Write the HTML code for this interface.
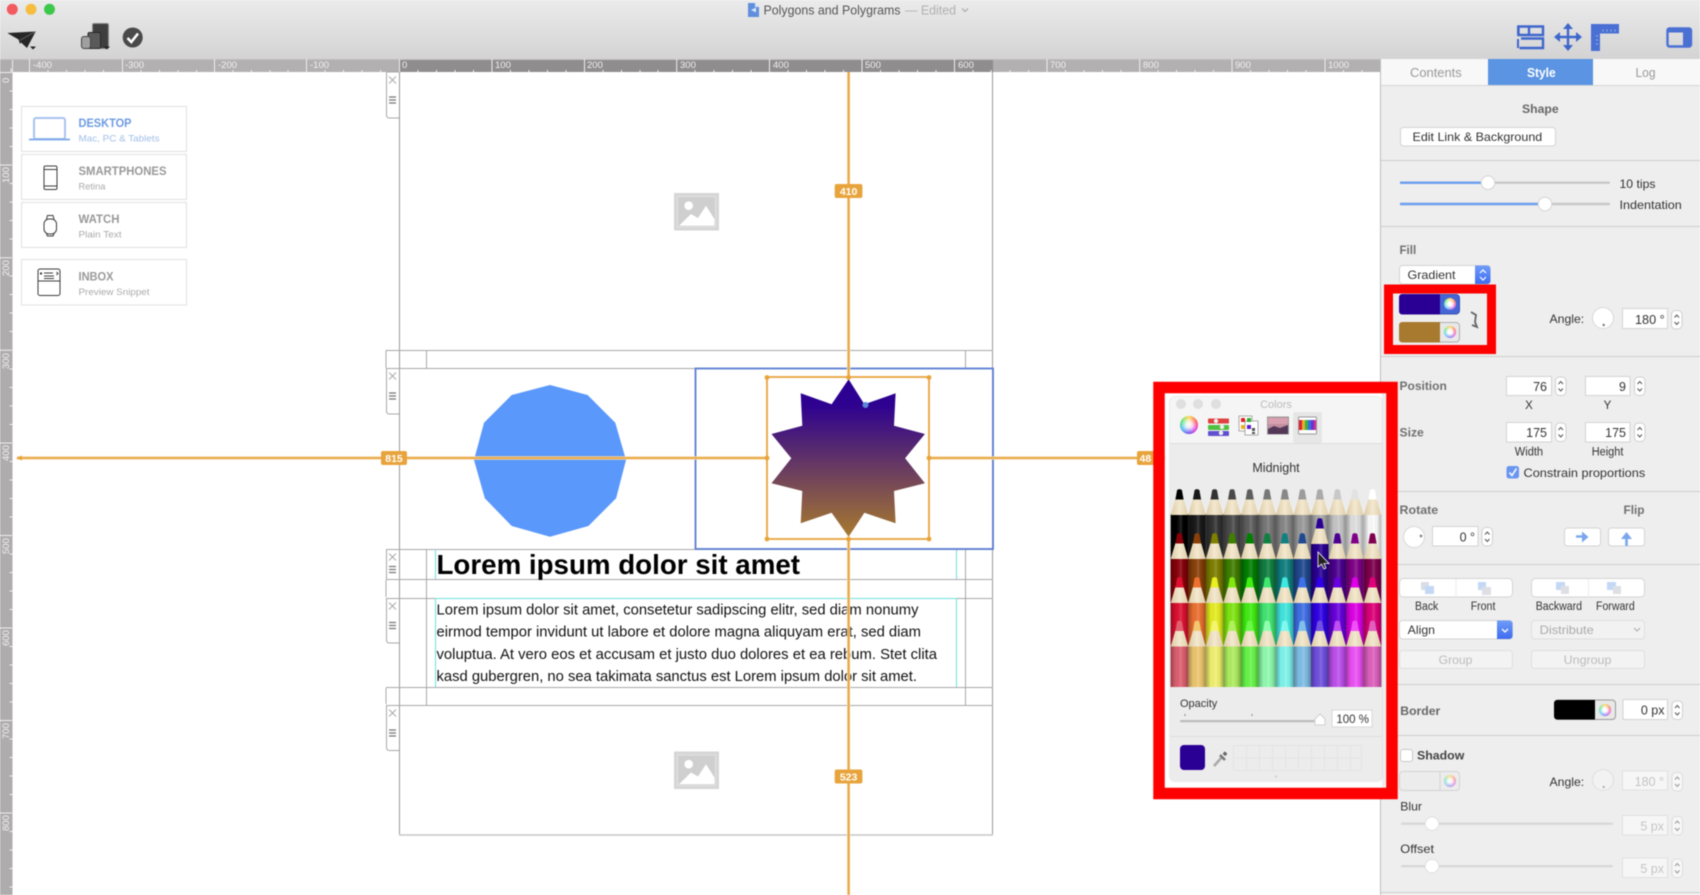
<!DOCTYPE html>
<html><head><meta charset="utf-8"><title>Polygons and Polygrams</title>
<style>
html,body{margin:0;padding:0;width:1700px;height:895px;overflow:hidden;background:#fff}
svg{position:absolute;left:0;top:0;filter:blur(.55px)}
text{font-family:"Liberation Sans",sans-serif;font-size:12px;fill:#333}
.b{font-weight:bold;fill:#707070}
.w{position:absolute;border-radius:50%;background:radial-gradient(circle,#fff 0,#fff 22%,rgba(255,255,255,0) 80%),conic-gradient(#ffd030,#ff5a4a,#e040d0,#6a60f0,#40c8f0,#50e070,#ffd030);filter:blur(.4px)}
</style></head><body>
<svg width="1700" height="895" viewBox="0 0 1700 895" xmlns="http://www.w3.org/2000/svg">
<defs>
<linearGradient id="tb" x1="0" y1="0" x2="0" y2="1"><stop offset="0" stop-color="#ebebec"/><stop offset="1" stop-color="#d4d3d4"/></linearGradient>
<linearGradient id="st" x1="0" y1="0" x2="0" y2="1"><stop offset="0" stop-color="#2a0094"/><stop offset=".17" stop-color="#2f0290"/><stop offset="1" stop-color="#a87a2e"/></linearGradient>
<linearGradient id="sel" x1="0" y1="0" x2="0" y2="1"><stop offset="0" stop-color="#6f9cf8"/><stop offset="1" stop-color="#3f6cf0"/></linearGradient>
<linearGradient id="sh" x1="0" y1="0" x2="1" y2="0"><stop offset="0" stop-color="#000" stop-opacity=".32"/><stop offset=".3" stop-color="#000" stop-opacity=".02"/><stop offset=".58" stop-color="#fff" stop-opacity=".16"/><stop offset=".75" stop-color="#000" stop-opacity=".04"/><stop offset="1" stop-color="#000" stop-opacity=".3"/></linearGradient>
<linearGradient id="cn" x1="0" y1="0" x2="1" y2="0"><stop offset="0" stop-color="#dcc9a2"/><stop offset=".5" stop-color="#f3e9d0"/><stop offset="1" stop-color="#dfcda8"/></linearGradient>
<g id="p"><rect y="25" width="17.55" height="90"/><rect y="25" width="17.55" height="90" fill="url(#sh)"/><path d="M0 26 4.7 10H12.9L17.55 26Z" fill="url(#cn)"/><path d="M6.4 1Q8.8-.8 11.2 1L12.9 10.5H4.7Z"/></g>
<g id="stp"><rect x=".5" y=".5" width="10.5" height="18.5" rx="4" fill="#fff" stroke="#d0d0d0"/><path d="M3.5 7.5 5.75 5 8 7.5M3.5 12 5.75 14.5 8 12" fill="none" stroke="#555" stroke-width="1"/></g>
<g id="x"><path d="M-3.5-3.5 3.5 3.5M3.5-3.5-3.5 3.5" stroke="#aaa" stroke-width="1" fill="none"/></g>
<g id="h"><path d="M-3.5-3H3.5M-3.5 0H3.5M-3.5 3H3.5" stroke="#777" stroke-width="1.2" fill="none"/></g>
<g id="im"><rect width="45" height="37.5" fill="#d6d6d6"/><rect x="3.5" y="3.5" width="38" height="30.5" fill="#cfcfcf" stroke="#e2e2e2" stroke-width="1"/><path d="M5 32.7 17 21 24 25 32 12.7 40.5 26V32.7Z" fill="#fff"/><circle cx="14.7" cy="12.7" r="4.3" fill="#fff"/></g>
</defs>

<!-- toolbar -->
<rect width="1700" height="59" fill="url(#tb)"/>
<circle cx="12.3" cy="9.3" r="5.5" fill="#f25a5f"/><circle cx="31" cy="9.3" r="5.5" fill="#f6bd3f"/><circle cx="49.5" cy="9.3" r="5.5" fill="#3ec84b"/>
<path d="M7.3 33 35.7 31.5 27 48 21 42.5 20 44 18.5 39.5Z" fill="#262626"/><path d="M35.7 31.5 19.5 40.5" stroke="#666" stroke-width=".8"/><path d="M30 46.5H36L33 49.5Z" fill="#222"/>
<rect x="92.5" y="23.5" width="16" height="25" rx="1.5" fill="#3e3e3e" stroke="#8a8a8a"/>
<rect x="88" y="32.5" width="12.5" height="16" rx="1.5" fill="#5a5a5a" stroke="#2a2a2a"/>
<rect x="81.5" y="36.5" width="9" height="12" rx="2.5" fill="#a0a0a0" stroke="#444"/>
<path d="M103.5 46.5H110L106.7 49.5Z" fill="#222"/>
<circle cx="132.7" cy="37.5" r="10" fill="#4a4a4a"/><path d="M127.5 38 131.3 42 138 33.5" fill="none" stroke="#fff" stroke-width="2.6"/>
<path d="M748 3H755L759 7V17H748Z" fill="#5f8fdc"/><path d="M755 3 759 7H755Z M751 10 756 7.5V12.5Z" fill="#d8e6fa"/>
<text x="763.5" y="14.5" font-size="12.5" style="font-size:12.5px;fill:#555" textLength="137" lengthAdjust="spacingAndGlyphs">Polygons and Polygrams</text>
<text x="905" y="14.5" style="font-size:12.5px;fill:#b0b0b0" textLength="51" lengthAdjust="spacingAndGlyphs">— Edited</text>
<path d="M962 8.5 965 11.5 968 8.5" fill="none" stroke="#aaa" stroke-width="1.2"/>
<g fill="none" stroke="#3f66cc" stroke-width="2.4">
<path d="M1518.5 26.5H1543V35H1518.5ZM1529 26.5V35M1521 38.5H1543V48H1519.5"/>
<path d="M1518 26V35M1518 39V48" stroke-width="2"/>
<path d="M1568 25V49M1556 37H1580"/>
</g>
<path d="M1568 23 1573 29H1563ZM1568 51 1573 45H1563ZM1554 37 1560 32V42ZM1582 37 1576 32V42Z" fill="#3f66cc"/>
<path d="M1591 24H1619V33.5H1600V51H1591Z" fill="#4a70d4"/>
<path d="M1603 31.5V29.5M1607 31.5V29.5M1611 31.5V29.5M1615 31.5V29.5M1596 36H1598M1596 40H1598M1596 44H1598" stroke="#9db6ea" stroke-width="1"/>
<rect x="1667.5" y="28.5" width="23.5" height="18" rx="2" fill="none" stroke="#4a70d4" stroke-width="2.4"/><rect x="1667" y="28" width="24" height="4.5" fill="#4a70d4"/><rect x="1683" y="28" width="8" height="19" fill="#4a70d4"/>

<!-- canvas + rulers -->
<rect x="0" y="72" width="1381" height="823" fill="#fff"/>
<rect x="0" y="59" width="1381" height="13" fill="#b2b0b1"/>
<rect x="399" y="59" width="594" height="13" fill="#8f8d8e"/>
<rect x="0" y="59" width="12.5" height="836" fill="#aeacad"/>
<rect x="0" y="59" width="1381" height="1" fill="#c0bfc0"/>
<g stroke="#efefef" stroke-width="1">
<path d="M29.5 59V72M122.5 59V72M214.5 59V72M306.5 59V72M399.5 59V72M492 59V72M584.5 59V72M676.7 59V72M769.5 59V72M862 59V72M954.5 59V72M1047 59V72M1139.7 59V72M1232 59V72M1325 59V72M12.5 60V72" />
<path d="M11 68.5V72M29.5 68.5V72M48 70V72M66.5 70V72M85 70V72M103.5 70V72M122.5 68V72M141 70V72M159.5 70V72M178 70V72M196.5 70V72M233 70V72M251.5 70V72M270 70V72M288 70V72M325 70V72M343.5 70V72M362 70V72M380.5 70V72M418 70V72M436.5 70V72M455 70V72M473.5 70V72M510.5 70V72M529 70V72M547.5 70V72M566 70V72M603 70V72M621.5 70V72M640 70V72M658 70V72M695 70V72M714 70V72M732.5 70V72M751 70V72M788 70V72M806.5 70V72M825 70V72M843.5 70V72M880.5 70V72M899 70V72M917.5 70V72M936 70V72M973 70V72M991 70V72M1010 70V72M1028.5 70V72M1065.5 70V72M1084 70V72M1102.5 70V72M1121 70V72M1158 70V72M1176.5 70V72M1195 70V72M1213.5 70V72M1250.5 70V72M1269 70V72M1287.5 70V72M1306 70V72M1343.5 70V72M1362 70V72"/>
<path d="M0 72.5H12M0 165H12M0 257.7H12M0 350.3H12M0 443H12M0 535.5H12M0 628H12M0 720.5H12M0 813H12"/>
<path d="M9.5 91H12.5M9.5 109.5H12.5M9.5 128H12.5M9.5 146.5H12.5M9.5 183.5H12.5M9.5 202H12.5M9.5 220.5H12.5M9.5 239H12.5M9.5 276H12.5M9.5 294.5H12.5M9.5 313H12.5M9.5 331.5H12.5M9.5 369H12.5M9.5 387.5H12.5M9.5 406H12.5M9.5 424.5H12.5M9.5 461.5H12.5M9.5 480H12.5M9.5 498.5H12.5M9.5 517H12.5M9.5 554H12.5M9.5 572.5H12.5M9.5 591H12.5M9.5 609.5H12.5M9.5 646.5H12.5M9.5 665H12.5M9.5 683.5H12.5M9.5 702H12.5M9.5 739H12.5M9.5 757.5H12.5M9.5 776H12.5M9.5 794.5H12.5M9.5 831.5H12.5M9.5 850H12.5M9.5 868.5H12.5M9.5 887H12.5"/>
</g>
<g style="fill:#fff" font-size="9">
<text x="33" y="68" style="font-size:9.5px;fill:#f2f2f2">-400</text><text x="125" y="68" style="font-size:9.5px;fill:#f2f2f2">-300</text><text x="218" y="68" style="font-size:9.5px;fill:#f2f2f2">-200</text><text x="310" y="68" style="font-size:9.5px;fill:#f2f2f2">-100</text>
<text x="402" y="68" style="font-size:9.5px;fill:#f2f2f2">0</text><text x="495" y="68" style="font-size:9.5px;fill:#f2f2f2">100</text><text x="587" y="68" style="font-size:9.5px;fill:#f2f2f2">200</text><text x="680" y="68" style="font-size:9.5px;fill:#f2f2f2">300</text><text x="773" y="68" style="font-size:9.5px;fill:#f2f2f2">400</text><text x="865" y="68" style="font-size:9.5px;fill:#f2f2f2">500</text><text x="958" y="68" style="font-size:9.5px;fill:#f2f2f2">600</text><text x="1050" y="68" style="font-size:9.5px;fill:#f2f2f2">700</text><text x="1143" y="68" style="font-size:9.5px;fill:#f2f2f2">800</text><text x="1235" y="68" style="font-size:9.5px;fill:#f2f2f2">900</text><text x="1328" y="68" style="font-size:9.5px;fill:#f2f2f2">1000</text>
<g style="font-size:9.5px">
<text transform="translate(9,83) rotate(-90)" style="font-size:9.5px;fill:#f2f2f2">0</text><text transform="translate(9,183) rotate(-90)" style="font-size:9.5px;fill:#f2f2f2">100</text><text transform="translate(9,276) rotate(-90)" style="font-size:9.5px;fill:#f2f2f2">200</text><text transform="translate(9,369) rotate(-90)" style="font-size:9.5px;fill:#f2f2f2">300</text><text transform="translate(9,461) rotate(-90)" style="font-size:9.5px;fill:#f2f2f2">400</text><text transform="translate(9,554) rotate(-90)" style="font-size:9.5px;fill:#f2f2f2">500</text><text transform="translate(9,646) rotate(-90)" style="font-size:9.5px;fill:#f2f2f2">600</text><text transform="translate(9,739) rotate(-90)" style="font-size:9.5px;fill:#f2f2f2">700</text><text transform="translate(9,831) rotate(-90)" style="font-size:9.5px;fill:#f2f2f2">800</text>
</g></g>

<!-- sidebar cards -->
<g fill="#fff" stroke="#e4e4e4" stroke-width="1.2">
<rect x="21.5" y="106.5" width="165" height="45"/><rect x="21.5" y="154.5" width="165" height="45"/><rect x="21.5" y="202.5" width="165" height="45"/><rect x="21.5" y="259.5" width="165" height="45.5"/>
</g>
<text x="78.5" y="127" class="b" style="fill:#6d9be0;font-size:11.5px" textLength="53" lengthAdjust="spacingAndGlyphs">DESKTOP</text>
<text x="78.5" y="141.5" style="fill:#a0bfe8;font-size:9.5px" textLength="81" lengthAdjust="spacingAndGlyphs">Mac, PC &amp; Tablets</text>
<text x="78.5" y="175" class="b" style="fill:#999;font-size:11.5px" textLength="88" lengthAdjust="spacingAndGlyphs">SMARTPHONES</text>
<text x="78.5" y="189.5" style="fill:#aaa;font-size:9.5px" textLength="27" lengthAdjust="spacingAndGlyphs">Retina</text>
<text x="78.5" y="223" class="b" style="fill:#999;font-size:11.5px" textLength="41" lengthAdjust="spacingAndGlyphs">WATCH</text>
<text x="78.5" y="237.5" style="fill:#aaa;font-size:9.5px" textLength="43" lengthAdjust="spacingAndGlyphs">Plain Text</text>
<text x="78.5" y="280.5" class="b" style="fill:#999;font-size:11.5px" textLength="35" lengthAdjust="spacingAndGlyphs">INBOX</text>
<text x="78.5" y="295" style="fill:#aaa;font-size:9.5px" textLength="71" lengthAdjust="spacingAndGlyphs">Preview Snippet</text>
<rect x="34" y="118" width="31" height="21" rx="2" fill="none" stroke="#a8c4f0" stroke-width="2"/><path d="M29 139.5H70" stroke="#7ba6e8" stroke-width="1.8"/>
<g fill="none" stroke="#3c3c3c" stroke-width="1"><rect x="44" y="166" width="13" height="23.5" rx="1.5"/><path d="M44 169.5H57M44 186H57"/>
<rect x="44" y="219" width="12.5" height="15" rx="5"/><path d="M46.5 219 47.5 215.5H53L54 219M46.5 234 47.5 236H53L54 234"/>
<rect x="38" y="269" width="22" height="26.5" rx="2"/><path d="M38 281H60M44 273H53M44 276H54M44 278.5H54M56.5 272 58 273.5 56.5 275"/></g><rect x="40" y="272.5" width="2" height="2" fill="#333"/>

<!-- page layout lines -->
<g fill="none" stroke="#a8a8a8" stroke-width="1">
<path d="M399.5 72V835M992.5 72V835" stroke="#999"/>
<path d="M386 350.5H993M386 368.5H993M386 549.5H993M386 579.5H993M386 598.5H993M386 687.5H993M386 705.5H993"/>
<path d="M426.5 350V369M965.5 350V369M426.5 549V687M965.5 549V705M426.5 687V705"/>
<path d="M399 835H993" stroke="#c8c8c8" stroke-width="1.6"/>
<path d="M386 351Q386 350 388 350.5M386 351V368M386 580V597M386 688V704"/>
<path d="M399 72H387M386.5 72V115Q386.5 118 389.5 118H399M386.5 369V411Q386.5 414 389.5 414H399M386.5 549V579M386.5 598V640Q386.5 643 389.5 643H399M386.5 705V747Q386.5 750.5 389.5 750.5H399"/>
</g>
<g stroke="#6ee0e0" stroke-width="1" fill="none"><path d="M435.5 549V579M956.5 549V579M435.5 598V687M956.5 598V687M435.5 598.5H957" /></g>
<use href="#x" x="392.5" y="80"/><use href="#h" x="392.5" y="100"/><use href="#x" x="392.5" y="376"/><use href="#h" x="392.5" y="396"/><use href="#x" x="392.5" y="557"/><use href="#h" x="392.5" y="569.5"/><use href="#x" x="392.5" y="606"/><use href="#h" x="392.5" y="625.5"/><use href="#x" x="392.5" y="713"/><use href="#h" x="392.5" y="733"/>
<use href="#im" x="674" y="193"/><use href="#im" x="674" y="751.5"/>

<!-- shapes -->
<polygon fill="#5b98fb" points="550,385 587.6,395 615.3,422.7 626,460 616.1,498.3 588.4,526 550,536.7 511.7,526 484.8,498.3 474,460 484,422.7 511.7,395"/>
<rect x="695.5" y="368.5" width="297.5" height="180.5" fill="none" stroke="#5b7ed2" stroke-width="1.8"/>
<polygon fill="url(#st)" points="848.6,379.3 864.4,404.3 895.6,393.3 894,425.7 924.9,434 905.1,458.3 924.9,483.3 894,491 895.6,523.3 864.4,512.7 848.6,536.7 831.6,512.7 800.7,523.3 802.3,491 771.5,483.3 791.3,458.3 771.5,434 802.3,425.7 800.7,393.3 831.6,404.3"/>
<circle cx="865.5" cy="405" r="3" fill="#5b86d8"/>

<!-- text -->
<text x="436.5" y="574" style="font-size:28px;font-weight:bold;fill:#000" textLength="363.5" lengthAdjust="spacingAndGlyphs">Lorem ipsum dolor sit amet</text>
<text x="436.5" y="614.5" style="font-size:15px;fill:#111" textLength="482" lengthAdjust="spacingAndGlyphs">Lorem ipsum dolor sit amet, consetetur sadipscing elitr, sed diam nonumy</text>
<text x="436.5" y="636.5" style="font-size:15px;fill:#111" textLength="484.5" lengthAdjust="spacingAndGlyphs">eirmod tempor invidunt ut labore et dolore magna aliquyam erat, sed diam</text>
<text x="436.5" y="659" style="font-size:15px;fill:#111" textLength="500.5" lengthAdjust="spacingAndGlyphs">voluptua. At vero eos et accusam et justo duo dolores et ea rebum. Stet clita</text>
<text x="436.5" y="681" style="font-size:15px;fill:#111" textLength="480.5" lengthAdjust="spacingAndGlyphs">kasd gubergren, no sea takimata sanctus est Lorem ipsum dolor sit amet.</text>

<!-- guides -->
<g fill="none">
<path d="M848.6 72V377M848.6 539V895" stroke="#f4dcb4" stroke-width="3.4"/>
<path d="M848.6 72V377M848.6 539V895" stroke="#e8a43c" stroke-width="1.8"/>
<path d="M17 458H766M929 458H1170" stroke="#f4dcb4" stroke-width="3.4"/>
<path d="M17 458H766M929 458H1170" stroke="#e8a43c" stroke-width="1.8"/>
<rect x="767" y="377" width="162" height="162" stroke="#e8a43c" stroke-width="1.8"/>
</g>
<path d="M16 458 22 455.5V460.5Z" fill="#e8a43c"/>
<g fill="#e8a43c"><circle cx="767" cy="377.5" r="2.4"/><circle cx="848.6" cy="377.5" r="2.4"/><circle cx="929" cy="377.5" r="2.4"/><circle cx="767" cy="458" r="2.4"/><circle cx="929" cy="458" r="2.4"/><circle cx="767" cy="539" r="2.4"/><circle cx="848.6" cy="539" r="2.4"/><circle cx="929" cy="539" r="2.4"/>
<rect x="381" y="451" width="26" height="14" rx="2"/><rect x="834.7" y="184" width="27.7" height="14" rx="2"/><rect x="834.7" y="769.5" width="27.7" height="14" rx="2"/><rect x="1137" y="451" width="26" height="14" rx="2"/></g>
<g style="font-weight:bold"><text x="394" y="462" text-anchor="middle" style="font-size:10.5px;fill:#fff;font-weight:bold">815</text><text x="848.6" y="195" text-anchor="middle" style="font-size:10.5px;fill:#fff;font-weight:bold">410</text><text x="848.6" y="780.5" text-anchor="middle" style="font-size:10.5px;fill:#fff;font-weight:bold">523</text><text x="1139.5" y="462" style="font-size:10.5px;fill:#fff;font-weight:bold">48</text></g>

<!-- inspector panel -->
<rect x="1380" y="59" width="320" height="836" fill="#eeeeee"/>
<rect x="1380" y="59" width="1" height="836" fill="#bdbdbd"/>
<rect x="1381" y="59" width="319" height="26" fill="#f8f8f8"/>
<rect x="1381" y="85" width="319" height="1" fill="#d6d6d6"/>
<rect x="1488" y="59" width="105" height="26" fill="#5b94e2"/>
<text x="1410" y="77" class="b" style="fill:#999;font-size:12.5px;font-weight:normal" textLength="51.7" lengthAdjust="spacingAndGlyphs">Contents</text>
<text x="1527" y="77" style="fill:#fff;font-size:12.5px;font-weight:bold" textLength="28.7" lengthAdjust="spacingAndGlyphs">Style</text>
<text x="1635.5" y="77" style="fill:#999;font-size:12.5px" textLength="20" lengthAdjust="spacingAndGlyphs">Log</text>
<g fill="#cecece"><rect x="1381" y="160" width="319" height="1"/><rect x="1381" y="226" width="319" height="1"/><rect x="1381" y="356" width="319" height="1"/><rect x="1381" y="491" width="319" height="1"/><rect x="1381" y="564" width="319" height="1"/><rect x="1381" y="684" width="319" height="1"/><rect x="1381" y="735" width="319" height="1"/><rect x="1381" y="892" width="319" height="1"/></g>
<text x="1522" y="113" class="b" textLength="36.7" lengthAdjust="spacingAndGlyphs" style="fill:#666">Shape</text>
<rect x="1400.5" y="127.5" width="155" height="18.5" rx="3" fill="#fff" stroke="#d4d4d4"/>
<text x="1412.5" y="141" textLength="129.7" lengthAdjust="spacingAndGlyphs">Edit Link &amp; Background</text>
<rect x="1400" y="181.5" width="210" height="2.4" rx="1" fill="#c8c8c8"/><rect x="1400" y="181.5" width="88" height="2.4" fill="#6a9ef0"/>
<circle cx="1488" cy="182.7" r="6.8" fill="#fff" stroke="#d4d4d4"/>
<rect x="1400" y="202.8" width="210" height="2.4" rx="1" fill="#c8c8c8"/><rect x="1400" y="202.8" width="145" height="2.4" fill="#6a9ef0"/>
<circle cx="1545" cy="204" r="6.8" fill="#fff" stroke="#d4d4d4"/>
<text x="1619.5" y="188" textLength="36" lengthAdjust="spacingAndGlyphs">10 tips</text>
<text x="1619.5" y="209" textLength="62.3" lengthAdjust="spacingAndGlyphs">Indentation</text>
<text x="1399.5" y="254" class="b" textLength="16.7" lengthAdjust="spacingAndGlyphs">Fill</text>
<rect x="1399.5" y="265.5" width="90.5" height="18.5" rx="3" fill="#fff" stroke="#d4d4d4"/>
<path d="M1475 265.5H1487Q1490.5 265.5 1490.5 269V280.5Q1490.5 284 1487 284H1475Z" fill="url(#sel)"/>
<path d="M1480 273 1483 270 1486 273M1480 277 1483 280 1486 277" stroke="#fff" fill="none" stroke-width="1.2"/>
<text x="1407.5" y="279" textLength="48" lengthAdjust="spacingAndGlyphs">Gradient</text>
<rect x="1399.5" y="294.5" width="60" height="19.5" rx="3.5" fill="#4566d6" stroke="#3a50b0"/><path d="M1399 297.5Q1399 294 1402.5 294H1440V314.5H1402.5Q1399 314.5 1399 311Z" fill="#2a0094"/>
<rect x="1399.5" y="322.5" width="60" height="19.5" rx="3.5" fill="#e8e8e8" stroke="#b0b0b0"/><path d="M1399 325.5Q1399 322 1402.5 322H1440V342.5H1402.5Q1399 342.5 1399 339Z" fill="#a87a30"/>
<path d="M1471 312 1476 315 1475 322 1477 327 1472 325" fill="none" stroke="#666" stroke-width="1.8"/>
<text x="1549.5" y="323" textLength="34.7" lengthAdjust="spacingAndGlyphs">Angle:</text>
<circle cx="1603" cy="318" r="10.5" fill="#fff" stroke="#d8d8d8"/><circle cx="1603.7" cy="325" r="1.2" fill="#777"/>
<rect x="1622.5" y="308.5" width="45" height="20" fill="#fff" stroke="#d4d4d4"/>
<text x="1635" y="324" style="font-size:12.5px" textLength="29.7" lengthAdjust="spacingAndGlyphs">180 °</text>
<use href="#stp" x="1671" y="310"/>

<text x="1399.5" y="390" class="b" textLength="47.3" lengthAdjust="spacingAndGlyphs">Position</text>
<g fill="#fff" stroke="#d4d4d4"><rect x="1506.5" y="376.5" width="45" height="19"/><rect x="1585.5" y="376.5" width="44.5" height="19"/><rect x="1506.5" y="422.5" width="45" height="19.5"/><rect x="1585.5" y="422.5" width="44.5" height="19.5"/><rect x="1432.5" y="526.5" width="45.5" height="19.5"/></g>
<text x="1547" y="391" text-anchor="end" style="font-size:12.5px">76</text><text x="1626" y="391" text-anchor="end" style="font-size:12.5px">9</text>
<text x="1547" y="437" text-anchor="end" style="font-size:12.5px">175</text><text x="1626" y="437" text-anchor="end" style="font-size:12.5px">175</text>
<use href="#stp" x="1555" y="376.5"/><use href="#stp" x="1634" y="376.5"/><use href="#stp" x="1555" y="422.5"/><use href="#stp" x="1634" y="422.5"/><use href="#stp" x="1481.5" y="527"/>
<text x="1529" y="409" text-anchor="middle" style="font-size:11.5px">X</text><text x="1607.5" y="409" text-anchor="middle" style="font-size:11.5px">Y</text>
<text x="1399.5" y="436.5" class="b" textLength="24.3" lengthAdjust="spacingAndGlyphs">Size</text>
<text x="1514.8" y="455.5" style="font-size:11.5px" textLength="28.3" lengthAdjust="spacingAndGlyphs">Width</text><text x="1591.7" y="455.5" style="font-size:11.5px" textLength="31.7" lengthAdjust="spacingAndGlyphs">Height</text>
<rect x="1506.5" y="466" width="12.5" height="12.5" rx="2.5" fill="#6a96f0"/><path d="M1509.5 472.5 1512 475.5 1516.5 468.5" stroke="#fff" stroke-width="1.5" fill="none"/>
<text x="1523.5" y="477" textLength="121.7" lengthAdjust="spacingAndGlyphs">Constrain proportions</text>
<text x="1399.5" y="514" class="b" textLength="38.7" lengthAdjust="spacingAndGlyphs">Rotate</text><text x="1623.5" y="514" class="b" textLength="21" lengthAdjust="spacingAndGlyphs">Flip</text>
<circle cx="1414" cy="537" r="10.5" fill="#fff" stroke="#d8d8d8"/><circle cx="1421" cy="536" r="1.4" fill="#888"/>
<text x="1475" y="541.5" text-anchor="end" style="font-size:12.5px">0 °</text>
<g fill="#fff" stroke="#d4d4d4"><rect x="1564.5" y="528" width="36" height="18" rx="3"/><rect x="1608.5" y="528" width="36" height="18" rx="3"/><rect x="1399.5" y="578.5" width="113" height="18.5" rx="4"/><rect x="1531.5" y="578.5" width="113" height="18.5" rx="4"/></g>
<path d="M1456 579V597M1588.5 579V597" stroke="#ececec"/>
<path d="M1576 536.5H1584" stroke="#7aa6ee" stroke-width="2.4"/><path d="M1582 531.5 1588.5 537 1582 542.5Z" fill="#7aa6ee"/>
<path d="M1626.5 539V546" stroke="#7aa6ee" stroke-width="2.6"/><path d="M1621 539 1626.5 532 1632 539Z" fill="#7aa6ee"/>
<g><rect x="1421" y="582" width="8" height="8" fill="#d8dde8"/><rect x="1425" y="586" width="9" height="8" fill="#c4d8f6"/><rect x="1478" y="582" width="8" height="8" fill="#c4d8f6"/><rect x="1482" y="587" width="9" height="8" fill="#dddfe4"/><rect x="1556" y="582" width="9" height="8" fill="#c4d8f6"/><rect x="1561" y="586" width="8" height="8" fill="#dddfe4"/><rect x="1607" y="582" width="9" height="8" fill="#c4d8f6"/><rect x="1613" y="586" width="8" height="8" fill="#dddfe4"/></g>
<text x="1415" y="610" style="font-size:11.5px" textLength="23.3" lengthAdjust="spacingAndGlyphs">Back</text><text x="1470.7" y="610" style="font-size:11.5px" textLength="24.7" lengthAdjust="spacingAndGlyphs">Front</text><text x="1535.7" y="610" style="font-size:11.5px" textLength="46.3" lengthAdjust="spacingAndGlyphs">Backward</text><text x="1596" y="610" style="font-size:11.5px" textLength="38.7" lengthAdjust="spacingAndGlyphs">Forward</text>
<rect x="1399.5" y="620.5" width="113" height="18.5" rx="3" fill="#fff" stroke="#d4d4d4"/><path d="M1497 620.5H1509Q1512.5 620.5 1512.5 624V635.5Q1512.5 639 1509 639H1497Z" fill="url(#sel)"/><path d="M1502 629 1505 632 1508 629" stroke="#fff" fill="none" stroke-width="1.3"/>
<text x="1407.7" y="634" textLength="27.3" lengthAdjust="spacingAndGlyphs">Align</text>
<rect x="1531.5" y="620.5" width="113" height="18.5" rx="3" fill="#f2f2f2" stroke="#dedede"/>
<text x="1539.7" y="634" style="fill:#aaa" textLength="54" lengthAdjust="spacingAndGlyphs">Distribute</text><path d="M1634 628 1637 631 1640 628" stroke="#aaa" fill="none"/>
<rect x="1399.5" y="650.5" width="113" height="18" rx="3" fill="#f3f3f3" stroke="#dedede"/><rect x="1531.5" y="650.5" width="113" height="18" rx="3" fill="#f3f3f3" stroke="#dedede"/>
<text x="1438.7" y="664" style="fill:#bbb" textLength="33.7" lengthAdjust="spacingAndGlyphs">Group</text><text x="1563.7" y="664" style="fill:#bbb" textLength="47.7" lengthAdjust="spacingAndGlyphs">Ungroup</text>
<text x="1400.3" y="715" class="b" style="fill:#666" textLength="40" lengthAdjust="spacingAndGlyphs">Border</text>
<rect x="1554.5" y="700" width="61" height="19.5" rx="3.5" fill="#e8e8e8" stroke="#999"/><path d="M1554 703.5Q1554 700 1557.5 700H1595V719.5H1557.5Q1554 719.5 1554 716Z" fill="#000"/>
<rect x="1623" y="699.5" width="44.5" height="20" fill="#fff" stroke="#d4d4d4"/><text x="1664.5" y="714.5" text-anchor="end" style="font-size:12.5px">0 px</text><use href="#stp" x="1671.5" y="700.5"/>
<rect x="1400.5" y="749.5" width="12" height="12" rx="2.5" fill="#fff" stroke="#c8c8c8"/>
<text x="1417" y="759.5" class="b" style="fill:#444" textLength="47.3" lengthAdjust="spacingAndGlyphs">Shadow</text>
<rect x="1399.5" y="771.5" width="60" height="19" rx="3.5" fill="#ececec" stroke="#d4d4d4"/><path d="M1440 772V790" stroke="#d4d4d4"/>
<text x="1549.5" y="786" textLength="34.7" lengthAdjust="spacingAndGlyphs">Angle:</text>
<circle cx="1603" cy="780" r="10.5" fill="#f2f2f2" stroke="#dedede"/><circle cx="1603.7" cy="787" r="1.1" fill="#aaa"/>
<g fill="#f6f6f6" stroke="#e0e0e0"><rect x="1622.5" y="771" width="45" height="19"/><rect x="1622.5" y="815.5" width="45" height="19.5"/><rect x="1622.5" y="858" width="45" height="19.5"/></g>
<text x="1664" y="786" text-anchor="end" style="font-size:12.5px;fill:#c4c4c4">180 °</text><text x="1664" y="830.5" text-anchor="end" style="font-size:12.5px;fill:#c4c4c4">5 px</text><text x="1664" y="873" text-anchor="end" style="font-size:12.5px;fill:#c4c4c4">5 px</text>
<g opacity=".55"><use href="#stp" x="1671.5" y="772"/><use href="#stp" x="1671.5" y="816"/><use href="#stp" x="1671.5" y="858.5"/></g>
<text x="1400.3" y="810.5" textLength="21.7" lengthAdjust="spacingAndGlyphs">Blur</text><text x="1400.3" y="853" textLength="33.7" lengthAdjust="spacingAndGlyphs">Offset</text>
<rect x="1401" y="822.5" width="212" height="2.4" rx="1" fill="#d8d8d8"/><rect x="1401" y="865" width="212" height="2.4" rx="1" fill="#d8d8d8"/>
<circle cx="1432" cy="823.7" r="6.8" fill="#fff" stroke="#e0e0e0"/><circle cx="1432" cy="866.2" r="6.8" fill="#fff" stroke="#e0e0e0"/>

<!-- colors window -->
<rect x="1165" y="393" width="221" height="395" fill="#fff"/>
<rect x="1382" y="393" width="5" height="395" fill="#eee"/>
<rect x="1169" y="396" width="214" height="386" rx="6" fill="#d8d8d8" opacity=".5"/>
<rect x="1170" y="397" width="212" height="384" rx="5" fill="#ececec"/>
<path d="M1170 443V402Q1170 397 1175 397H1377Q1382 397 1382 402V443Z" fill="#f5f5f5"/>
<rect x="1170" y="443" width="212" height="1" fill="#dedede"/>
<circle cx="1181" cy="404" r="5" fill="#dfdfdf"/><circle cx="1198" cy="404" r="5" fill="#dfdfdf"/><circle cx="1216" cy="404" r="5" fill="#dfdfdf"/>
<text x="1276" y="408" text-anchor="middle" style="font-size:11px;fill:#bbb">Colors</text>
<rect x="1293" y="412" width="29" height="31" rx="2" fill="#e6e6e6"/>
<g><rect x="1208" y="418.5" width="21" height="5" rx="1" fill="#e04040"/><rect x="1208" y="425" width="21" height="5" rx="1" fill="#50c040"/><rect x="1208" y="431" width="21" height="5" rx="1" fill="#6050d0"/><circle cx="1216" cy="421" r="2.2" fill="#eee"/><circle cx="1222" cy="427" r="2.2" fill="#eee"/><circle cx="1221" cy="433" r="2.2" fill="#eee"/>
<rect x="1239" y="416" width="13" height="15" fill="#fff" stroke="#aaa"/><rect x="1245" y="421" width="13" height="14" fill="#fff" stroke="#aaa"/><g><rect x="1241" y="418" width="4" height="4" fill="#e02020"/><rect x="1247" y="418" width="4" height="4" fill="#30b030"/><rect x="1241" y="425" width="4" height="4" fill="#e8b020"/><rect x="1247" y="425" width="4" height="4" fill="#6020d0"/><rect x="1252" y="428" width="3" height="3" fill="#555"/><rect x="1252" y="432" width="3" height="2" fill="#555"/></g>
<rect x="1267.5" y="417" width="21" height="17" fill="#c090a0" stroke="#999"/><path d="M1268 429 1274 426 1280 428 1288 425V434H1268Z" fill="#553858"/><path d="M1268 418H1288V424H1268Z" fill="#d8a0b0"/>
<rect x="1298.5" y="417" width="18" height="17" rx="1" fill="#fff" stroke="#999"/><g><rect x="1299" y="420" width="3" height="10" fill="#e02030"/><rect x="1302" y="420" width="3" height="10" fill="#e0b030"/><rect x="1305" y="420" width="3" height="10" fill="#40b040"/><rect x="1308" y="420" width="3" height="10" fill="#3070e0"/><rect x="1311" y="420" width="3" height="10" fill="#7030d0"/><rect x="1314" y="420" width="2" height="10" fill="#d03090"/></g></g>
<text x="1276" y="472" text-anchor="middle" style="font-size:12.5px;fill:#333">Midnight</text>

<!-- pencils -->
<clipPath id="pc"><rect x="1170.5" y="485" width="211" height="202"/></clipPath>
<g clip-path="url(#pc)">
<use href="#p" x="1170.7" y="489" fill="#000"/><use href="#p" x="1188.2" y="489" fill="#181818"/><use href="#p" x="1205.8" y="489" fill="#333"/><use href="#p" x="1223.3" y="489" fill="#4a4a4a"/><use href="#p" x="1240.9" y="489" fill="#5e5e5e"/><use href="#p" x="1258.4" y="489" fill="#777"/><use href="#p" x="1276" y="489" fill="#888"/><use href="#p" x="1293.5" y="489" fill="#9c9c9c"/><use href="#p" x="1311" y="489" fill="#aaa"/><use href="#p" x="1328.6" y="489" fill="#c8c8c8"/><use href="#p" x="1346.1" y="489" fill="#e2e2e2"/><use href="#p" x="1363.7" y="489" fill="#fff"/>
<use href="#p" x="1170.7" y="533" fill="#8a0008"/><use href="#p" x="1188.2" y="533" fill="#8a4008"/><use href="#p" x="1205.8" y="533" fill="#808000"/><use href="#p" x="1223.3" y="533" fill="#408000"/><use href="#p" x="1240.9" y="533" fill="#008000"/><use href="#p" x="1258.4" y="533" fill="#108040"/><use href="#p" x="1276" y="533" fill="#108080"/><use href="#p" x="1293.5" y="533" fill="#204a90"/><use href="#p" x="1311" y="518" fill="#2a0094"/><use href="#p" x="1328.6" y="533" fill="#4c0090"/><use href="#p" x="1346.1" y="533" fill="#800088"/><use href="#p" x="1363.7" y="533" fill="#800050"/>
<use href="#p" x="1170.7" y="577" fill="#e01030"/><use href="#p" x="1188.2" y="577" fill="#ee7030"/><use href="#p" x="1205.8" y="577" fill="#e8f020"/><use href="#p" x="1223.3" y="577" fill="#80e810"/><use href="#p" x="1240.9" y="577" fill="#40f010"/><use href="#p" x="1258.4" y="577" fill="#40e870"/><use href="#p" x="1276" y="577" fill="#40e8e0"/><use href="#p" x="1293.5" y="577" fill="#4070e8"/><use href="#p" x="1311" y="577" fill="#3000e8"/><use href="#p" x="1328.6" y="577" fill="#6800e0"/><use href="#p" x="1346.1" y="577" fill="#e000e8"/><use href="#p" x="1363.7" y="577" fill="#e0007a"/>
<use href="#p" x="1170.7" y="620.5" fill="#e06070"/><use href="#p" x="1188.2" y="620.5" fill="#f0c870"/><use href="#p" x="1205.8" y="620.5" fill="#f4f470"/><use href="#p" x="1223.3" y="620.5" fill="#b0f060"/><use href="#p" x="1240.9" y="620.5" fill="#68f848"/><use href="#p" x="1258.4" y="620.5" fill="#90ffb0"/><use href="#p" x="1276" y="620.5" fill="#80f8f0"/><use href="#p" x="1293.5" y="620.5" fill="#80c0e8"/><use href="#p" x="1311" y="620.5" fill="#7050e0"/><use href="#p" x="1328.6" y="620.5" fill="#c050f0"/><use href="#p" x="1346.1" y="620.5" fill="#f050f8"/><use href="#p" x="1363.7" y="620.5" fill="#e060c0"/>
</g>
<path d="M1318 552V567L1321.5 564 1324 569 1326 568 1324 563.5H1329Z" fill="#222" stroke="#fff" stroke-width=".8"/>

<!-- opacity -->
<text x="1180" y="707" style="font-size:11px;fill:#333">Opacity</text>
<rect x="1180" y="720" width="140" height="2.2" rx="1" fill="#bcbcbc"/>
<path d="M1185 714V716M1252 714V716" stroke="#888"/>
<path d="M1315 719 1320 714 1325 719V725H1315Z" fill="#fff" stroke="#d0d0d0"/>
<rect x="1332" y="710" width="40" height="17" fill="#fff" stroke="#d8d8d8"/>
<text x="1369" y="723" text-anchor="end" style="font-size:11.5px">100 %</text>
<rect x="1170" y="736" width="212" height="1" fill="#dedede"/>
<rect x="1180" y="745" width="25" height="25" rx="4" fill="#2a0094"/>
<path d="M1214 766 1222 757" stroke="#aaa" stroke-width="2.6"/><path d="M1220 755 1225 760" stroke="#777" stroke-width="2.6"/><path d="M1224 755 1226 752.5" stroke="#666" stroke-width="3.5"/>
<g fill="none" stroke="#e4e4e4"><path d="M1233.5 745.5H1362M1233.5 758H1362M1233.5 770.5H1362M1233.5 745V771M1246.5 745V771M1259.5 745V771M1272.5 745V771M1285.5 745V771M1298.5 745V771M1311.5 745V771M1324.5 745V771M1337.5 745V771M1350.5 745V771M1361.5 745V771"/></g>
<circle cx="1276" cy="776.5" r="1" fill="#ccc"/>

<!-- red annotations -->
<rect x="1388.5" y="289" width="103" height="60.5" fill="none" stroke="#ff0000" stroke-width="9"/>
<rect x="1159" y="387.5" width="233" height="406" fill="none" stroke="#ff0000" stroke-width="11.5"/>
</svg>
<div class="w" style="left:1443.5px;top:298px;width:12px;height:12px"></div>
<div class="w" style="left:1443.5px;top:326px;width:12px;height:12px"></div>
<div class="w" style="left:1599px;top:703.5px;width:12px;height:12px"></div>
<div class="w" style="left:1444px;top:775px;width:12px;height:12px;opacity:.7"></div>
<div class="w" style="left:1180px;top:416px;width:18px;height:18px;background:radial-gradient(circle,#fff 0,rgba(255,255,255,.85) 25%,rgba(255,255,255,0) 75%),conic-gradient(#ffd030,#ff4040,#e020d0,#6030f0,#30b0f0,#40e060,#ffd030)"></div>
</body></html>
